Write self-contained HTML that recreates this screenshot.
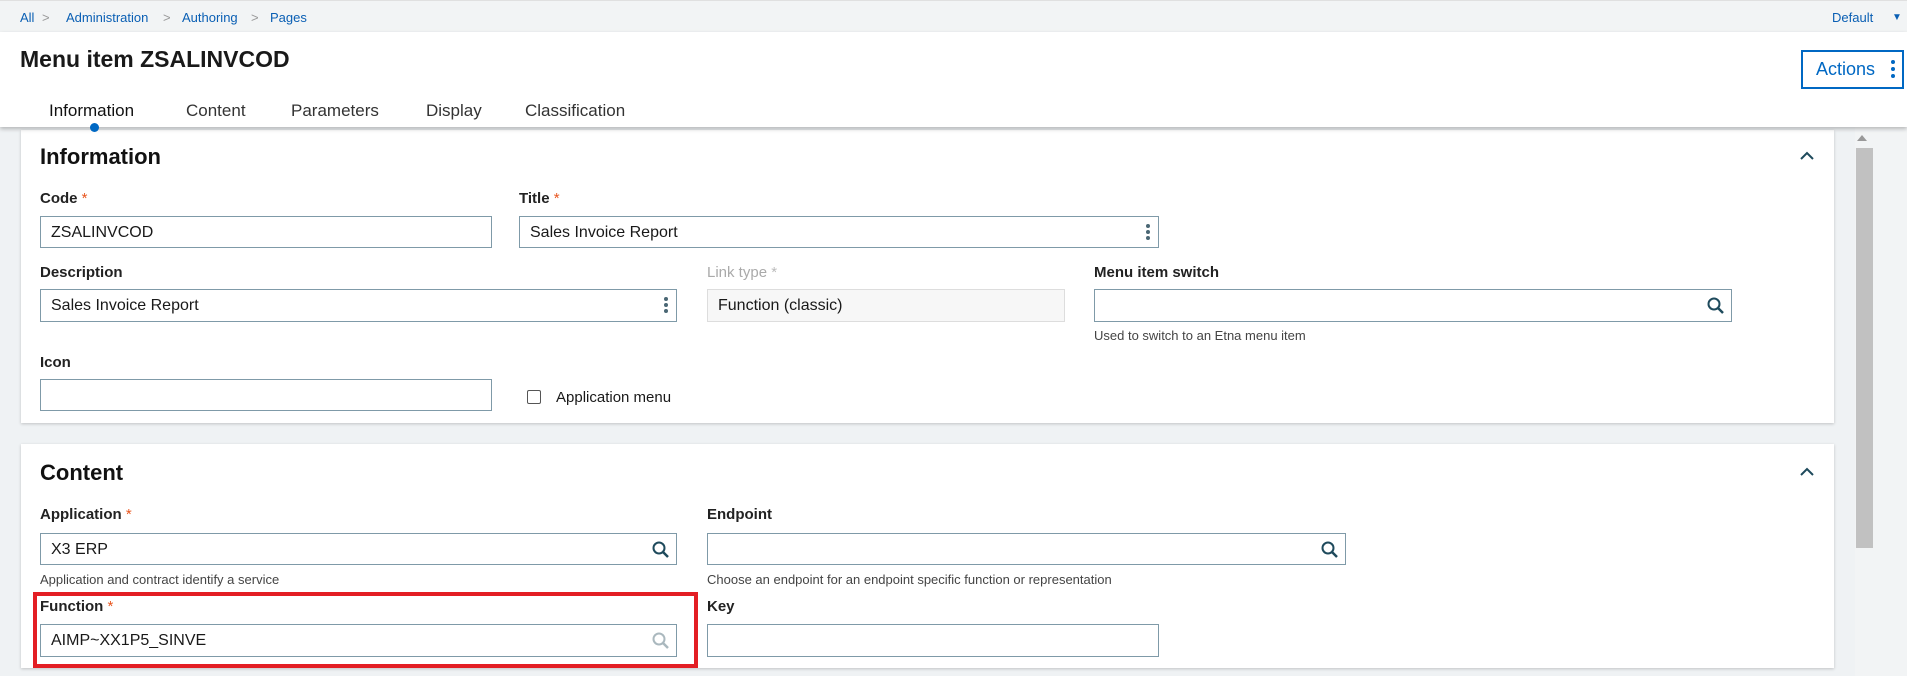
<!DOCTYPE html>
<html><head><style>
*{box-sizing:border-box;margin:0;padding:0}
body{width:1907px;height:676px;overflow:hidden;background:#eff2f4;font-family:"Liberation Sans",sans-serif;position:relative;color:#191919}
.a{position:absolute}
.bc{top:0;left:0;width:1907px;height:32px;background:#f2f4f5;border-top:1px solid #e0e0e0}
.bc span{position:absolute;top:9px;font-size:13px;color:#0a5fb4}
.hdr{top:32px;left:0;width:1907px;height:95px;background:#fff;box-shadow:0 2px 4px rgba(0,0,0,.25);z-index:2}
.tab{position:absolute;top:69px;font-size:17px;color:#333}
.card{background:#fff;box-shadow:0 1px 3px rgba(0,0,0,.2)}
.h{font-size:22px;font-weight:bold;color:#111}
.lbl{font-size:15px;font-weight:bold;color:#222}
.req{color:#e8561f;font-weight:normal}
.in{border:1px solid #7f9aa8;background:#fff;font-size:16px;padding:6px 10px 0;line-height:20px}
.hint{font-size:13px;color:#444}
.dots{position:absolute;right:8px;top:7px;width:4px}
.dots i{display:block;width:4px;height:4px;border-radius:2px;background:#4a6774;margin-bottom:2px}
</style></head><body>
<div class="a bc">
<span style="left:20px">All</span><span style="left:42px;color:#999">&gt;</span>
<span style="left:66px">Administration</span><span style="left:163px;color:#999">&gt;</span>
<span style="left:182px">Authoring</span><span style="left:251px;color:#999">&gt;</span>
<span style="left:270px">Pages</span>
<span style="left:1832px">Default</span><span style="left:1892px;font-size:10px;top:11px">▼</span>
</div>
<div class="a hdr">
<div class="a" style="left:20px;top:14px;font-size:23px;font-weight:bold">Menu item ZSALINVCOD</div>
<div class="a" style="left:1801px;top:18px;width:103px;height:39px;border:2px solid #0068c3;color:#0068c3;font-size:18px;padding:7px 0 0 13px">Actions
<div style="position:absolute;right:7px;top:8px"><i style="display:block;width:4px;height:4px;border-radius:2px;background:#0068c3;margin-bottom:3px"></i><i style="display:block;width:4px;height:4px;border-radius:2px;background:#0068c3;margin-bottom:3px"></i><i style="display:block;width:4px;height:4px;border-radius:2px;background:#0068c3"></i></div></div>
<div class="tab" style="left:49px;color:#111">Information</div>
<div class="tab" style="left:186px">Content</div>
<div class="tab" style="left:291px">Parameters</div>
<div class="tab" style="left:426px">Display</div>
<div class="tab" style="left:525px">Classification</div>
<div class="a" style="left:90px;top:91px;width:9px;height:9px;border-radius:5px;background:#0068c3"></div>
</div>
<div class="a" style="left:1855px;top:127px;width:52px;height:549px;background:#f2f4f5"></div>
<div class="a" style="left:1857px;top:135px;width:0;height:0;border:5px solid transparent;border-bottom:6px solid #999;border-top:0"></div>
<div class="a" style="left:1856px;top:148px;width:17px;height:400px;background:#c1c1c1"></div>

<div class="a card" style="left:21px;top:130px;width:1813px;height:293px"></div>
<div class="a h" style="left:40px;top:144px">Information</div>
<svg class="a" style="left:1799px;top:150px" width="16" height="12"><path d="M2 9 L8 3 L14 9" stroke="#1e4a5c" stroke-width="2" fill="none"/></svg>
<div class="a lbl" style="left:40px;top:190px">Code <span class="req">*</span></div>
<div class="a in" style="left:40px;top:216px;width:452px;height:32px">ZSALINVCOD</div>
<div class="a lbl" style="left:519px;top:190px">Title <span class="req">*</span></div>
<div class="a in" style="left:519px;top:216px;width:640px;height:32px">Sales Invoice Report<div class="dots"><i></i><i></i><i></i></div></div>
<div class="a lbl" style="left:40px;top:264px">Description</div>
<div class="a in" style="left:40px;top:289px;width:637px;height:33px">Sales Invoice Report<div class="dots"><i></i><i></i><i></i></div></div>
<div class="a lbl" style="left:707px;top:264px;color:#aaa;font-weight:normal">Link type <span style="color:#bbb">*</span></div>
<div class="a in" style="left:707px;top:289px;width:358px;height:33px;background:#f7f7f7;border-color:#ddd">Function (classic)</div>
<div class="a lbl" style="left:1094px;top:264px">Menu item switch</div>
<div class="a in" style="left:1094px;top:289px;width:638px;height:33px"><svg class="a" style="right:6px;top:7px" width="18" height="18"><circle cx="7" cy="7" r="5.5" stroke="#1e4a5c" stroke-width="2" fill="none"/><path d="M11 11 L16 16" stroke="#1e4a5c" stroke-width="2.5"/></svg></div>
<div class="a hint" style="left:1094px;top:328px">Used to switch to an Etna menu item</div>
<div class="a lbl" style="left:40px;top:354px">Icon</div>
<div class="a in" style="left:40px;top:379px;width:452px;height:32px"></div>
<div class="a" style="left:527px;top:390px;width:14px;height:14px;border:1px solid #555;border-radius:2px"></div>
<div class="a" style="left:556px;top:389px;font-size:15px">Application menu</div>

<div class="a card" style="left:21px;top:444px;width:1813px;height:224px"></div>
<div class="a h" style="left:40px;top:460px">Content</div>
<svg class="a" style="left:1799px;top:466px" width="16" height="12"><path d="M2 9 L8 3 L14 9" stroke="#1e4a5c" stroke-width="2" fill="none"/></svg>
<div class="a lbl" style="left:40px;top:506px">Application <span class="req">*</span></div>
<div class="a in" style="left:40px;top:533px;width:637px;height:32px">X3 ERP<svg class="a" style="right:6px;top:7px" width="18" height="18"><circle cx="7" cy="7" r="5.5" stroke="#1e4a5c" stroke-width="2" fill="none"/><path d="M11 11 L16 16" stroke="#1e4a5c" stroke-width="2.5"/></svg></div>
<div class="a hint" style="left:40px;top:572px">Application and contract identify a service</div>
<div class="a lbl" style="left:707px;top:506px">Endpoint</div>
<div class="a in" style="left:707px;top:533px;width:639px;height:32px"><svg class="a" style="right:6px;top:7px" width="18" height="18"><circle cx="7" cy="7" r="5.5" stroke="#1e4a5c" stroke-width="2" fill="none"/><path d="M11 11 L16 16" stroke="#1e4a5c" stroke-width="2.5"/></svg></div>
<div class="a hint" style="left:707px;top:572px">Choose an endpoint for an endpoint specific function or representation</div>
<div class="a lbl" style="left:40px;top:598px">Function <span class="req">*</span></div>
<div class="a in" style="left:40px;top:624px;width:637px;height:33px">AIMP~XX1P5_SINVE<svg class="a" style="right:6px;top:7px" width="18" height="18"><circle cx="7" cy="7" r="5.5" stroke="#aab8be" stroke-width="2" fill="none"/><path d="M11 11 L16 16" stroke="#aab8be" stroke-width="2.5"/></svg></div>
<div class="a lbl" style="left:707px;top:598px">Key</div>
<div class="a in" style="left:707px;top:624px;width:452px;height:33px"></div>
<div class="a" style="left:33px;top:592px;width:665px;height:76px;border:4px solid #e31e24"></div>
</body></html>
